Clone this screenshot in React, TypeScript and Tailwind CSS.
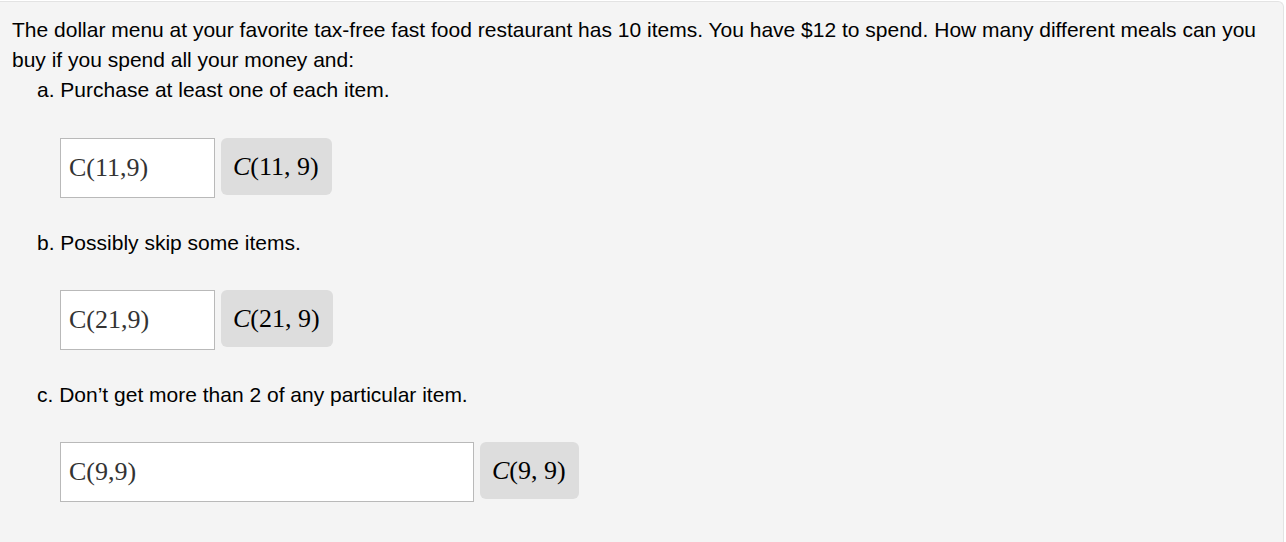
const SANS = "font-['Liberation_Sans',Arial,sans-serif]";

function AnswerRow({ value, rendered, wide }: { value: string; rendered: string; wide?: boolean }) {
  const [name, args] = rendered.split('(');
  return (
    <div className="flex items-start gap-[6px] pl-[48px]">
      <div
        className={`flex h-[60px] items-center border border-[#b9b9b9] bg-white px-[8px] text-[26px] text-[#333] font-['Liberation_Serif','DejaVu_Serif',serif] ${
          wide ? 'w-[414px]' : 'w-[155px]'
        }`}
      >
        {value}
      </div>
      <div className="flex h-[57px] items-center rounded-[6px] bg-[#dddddd] pr-[13px] pl-[12px] text-[26px] text-black font-['Liberation_Serif','DejaVu_Serif',serif]">
        <span className="italic">{name}</span>
        <span>({args.replace(',', ', ')}</span>
      </div>
    </div>
  );
}

export default function App() {
  return (
    <div className="h-[542px] w-[1286px] overflow-hidden bg-white pt-px">
      <div className={`h-full w-[1284px] rounded-tr-md border-t border-r border-[#e3e3e3] bg-[#f4f4f4] px-[12px] pt-[13px] text-[21px] leading-[30px] text-black ${SANS}`}>
        <p>
          The dollar menu at your favorite tax-free fast food restaurant has 10 items. You have $12 to spend. How many
          different meals can you buy if you spend all your money and:
        </p>
        <p className="pl-[25px]">a. Purchase at least one of each item.</p>
        <div className="mt-[33px]">
          <AnswerRow value="C(11,9)" rendered="C(11,9)" />
        </div>
        <p className="mt-[30px] pl-[25px]">b. Possibly skip some items.</p>
        <div className="mt-[32px]">
          <AnswerRow value="C(21,9)" rendered="C(21,9)" />
        </div>
        <p className="mt-[30px] pl-[25px]">c. Don’t get more than 2 of any particular item.</p>
        <div className="mt-[32px]">
          <AnswerRow value="C(9,9)" rendered="C(9,9)" wide />
        </div>
      </div>
    </div>
  );
}
